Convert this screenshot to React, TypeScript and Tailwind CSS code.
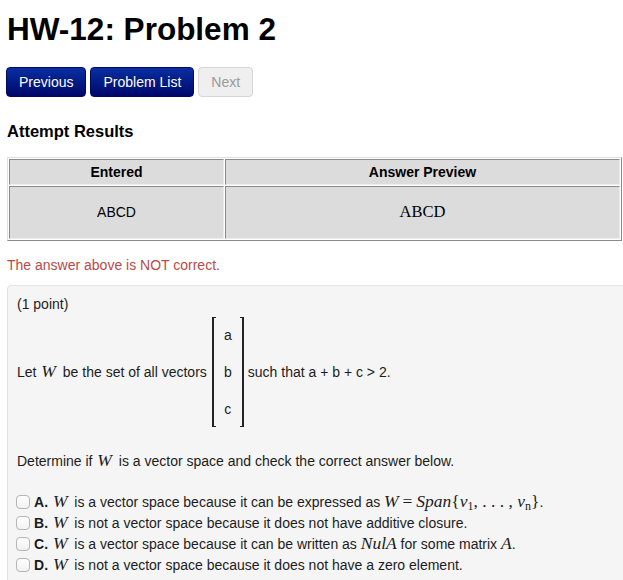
import React from "react";

const sans = "font-['Liberation_Sans',Arial,Helvetica,sans-serif]";

const Mi = ({ children, className = "" }: { children: React.ReactNode; className?: string }) => (
  <span className={`font-['Liberation_Serif','Times_New_Roman',serif] italic text-[17.5px] leading-none ${className}`}>
    {children}
  </span>
);

// MathJax leaves a little more room after the italic W
const W = () => <Mi className="pl-[1px] pr-[3px]">W</Mi>;

const Mo = ({ children }: { children: React.ReactNode }) => (
  <span className="font-['Liberation_Serif','Times_New_Roman',serif] text-[17.5px] leading-none">
    {children}
  </span>
);

const Sub = ({ children }: { children: React.ReactNode }) => (
  <span className="font-['Liberation_Serif','Times_New_Roman',serif] text-[12px] leading-none relative top-[3px]">
    {children}
  </span>
);

const NavButton = ({ label, disabled }: { label: string; disabled?: boolean }) =>
  disabled ? (
    <button className="h-[30px] rounded-[4px] border border-[#d6d6d6] bg-[#efefef] px-[12px] text-[14px] text-[#9a9a9a]">
      {label}
    </button>
  ) : (
    <button className="h-[30px] rounded-[4px] border border-[#000a5e] bg-gradient-to-b from-[#0b2ea3] to-[#00066a] px-[12px] text-[14px] text-white [text-shadow:0_-1px_0_rgba(0,0,0,0.25)]">
      {label}
    </button>
  );

const Checkbox = () => (
  <span className="inline-block h-[14px] w-[14px] shrink-0 rounded-[4px] border border-[#b5b5b5] bg-gradient-to-b from-white to-[#f1f1f1]" />
);

const Option = ({ letter, children }: { letter: string; children: React.ReactNode }) => (
  <div className="flex h-[21px] items-center">
    <span className="-ml-[1px] mr-[4px] flex">
      <Checkbox />
    </span>
    <span className="whitespace-nowrap">
      <b>{letter}.</b> {children}
    </span>
  </div>
);

const cell =
  "border border-t-[#8a8a8a] border-l-[#8a8a8a] border-r-[#ececec] border-b-[#ececec] bg-[#dcdcdc] text-center p-0";

export default function App() {
  return (
    <div className={`${sans} h-[580px] w-[623px] overflow-hidden bg-white pl-[7px] text-[#1c1c1c]`}>
      <h1 className="mt-[11px] text-[31.5px] font-bold leading-[36px] text-black">HW-12: Problem 2</h1>

      <div className="mt-[20px] flex gap-[4px] -ml-[1px]">
        <NavButton label="Previous" />
        <NavButton label="Problem List" />
        <NavButton label="Next" disabled />
      </div>

      <h3 className="mt-[24px] text-[16.5px] font-bold leading-[20px] text-black">Attempt Results</h3>

      <table className="mt-[16px] w-[615px] border-separate border-spacing-[1px] border border-t-[#e0e0e0] border-l-[#e0e0e0] border-r-[#8a8a8a] border-b-[#8a8a8a] text-[14px] text-black">
        <thead>
          <tr>
            <th className={`${cell} h-[26px] w-[215px] font-bold`}>Entered</th>
            <th className={`${cell} h-[26px] font-bold`}>Answer Preview</th>
          </tr>
        </thead>
        <tbody>
          <tr>
            <td className={`${cell} h-[53px]`}>ABCD</td>
            <td className={`${cell} h-[53px] font-['Liberation_Serif','Times_New_Roman',serif] text-[16.5px]`}>ABCD</td>
          </tr>
        </tbody>
      </table>

      <p className="mt-[14px] text-[14px] leading-[20px] text-[#b94a48]">The answer above is NOT correct.</p>

      <div className="mt-[10px] w-[630px] rounded-tl-[4px] border border-[#e3e3e3] bg-[#f5f5f5] pb-[20px] pl-[9px] pt-[8px] text-[14px] leading-[20px]">
        <div>(1 point)</div>

        <div className="mt-[3px] flex items-center">
          <span className="whitespace-nowrap">
            Let <W /> be the set of all vectors
          </span>
          <div className="ml-[5px] flex h-[110px]">
            <div className="w-[4px] border-y-[1.5px] border-l-2 border-[#222]" />
            <div className="flex w-[24px] flex-col justify-between py-[10px] text-center leading-[16px]">
              <span>a</span>
              <span>b</span>
              <span>c</span>
            </div>
            <div className="w-[4px] border-y-[1.5px] border-r-2 border-[#222]" />
          </div>
          <span className="ml-[4px] whitespace-nowrap">such that a + b + c &gt; 2.</span>
        </div>

        <div className="mt-[24px]">
          Determine if <W /> is a vector space and check the correct answer below.
        </div>

        <div className="mt-[20px] flex flex-col">
          <Option letter="A">
            <W /> is a vector space because it can be expressed as <Mi>W</Mi> <Mo>=</Mo> <Mi>Span</Mi>
            <Mo>{"{"}</Mo>
            <Mi>v</Mi>
            <Sub>1</Sub>
            <Mo>, . . . , </Mo>
            <Mi>v</Mi>
            <Sub>n</Sub>
            <Mo>{"}"}</Mo>.
          </Option>
          <Option letter="B">
            <W /> is not a vector space because it does not have additive closure.
          </Option>
          <Option letter="C">
            <W /> is a vector space because it can be written as <Mi>NulA</Mi> for some matrix <Mi>A</Mi>.
          </Option>
          <Option letter="D">
            <W /> is not a vector space because it does not have a zero element.
          </Option>
        </div>
      </div>
    </div>
  );
}
